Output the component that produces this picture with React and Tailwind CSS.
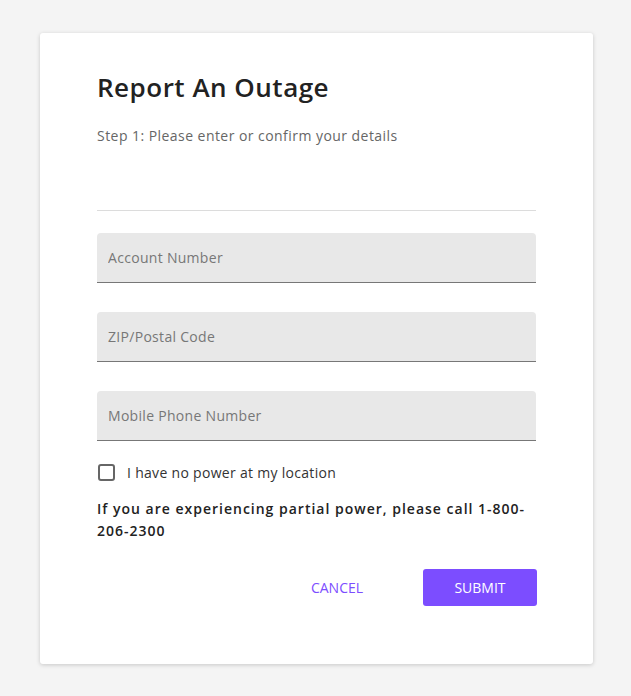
import React, { useState } from 'react'

const fields = ['Account Number', 'ZIP/Postal Code', 'Mobile Phone Number']

export default function App() {
  const [values, setValues] = useState({})
  const [noPower, setNoPower] = useState(false)

  return (
    <div className="min-h-screen bg-[#f4f4f4] pt-[33px] pl-[40px] font-['Open_Sans',sans-serif]">
      <div className="w-[553px] h-[631px] bg-white rounded-[3px] shadow-[0_1px_4px_rgba(0,0,0,0.18)] px-[57px] pt-[36px]">
        <h1 className="text-[26px] leading-[36px] font-semibold text-[#222] tracking-[0.5px]">Report An Outage</h1>
        <p className="mt-[21px] text-[14px] leading-[20px] text-[#666] tracking-[0.45px]">Step 1: Please enter or confirm your details</p>

        <div className="mt-[64px] border-t border-[#dcdcdc]" />

        <div className="mt-[22px] flex flex-col gap-[29px]">
          {fields.map(f => (
            <input
              key={f}
              placeholder={f}
              value={values[f] || ''}
              onChange={e => setValues({ ...values, [f]: e.target.value })}
              className="h-[50px] w-full bg-[#e8e8e8] rounded-t-[4px] border-b border-[#777] px-[11px] text-[14px] tracking-[0.3px] text-[#333] placeholder:text-[#777] outline-none"
            />
          ))}
        </div>

        <label className="mt-[21px] flex items-center gap-[12px] cursor-pointer">
          <input
            type="checkbox"
            checked={noPower}
            onChange={() => setNoPower(!noPower)}
            className="w-[17px] h-[17px] ml-[1px] appearance-none border-2 border-[#666] rounded-[3px] checked:bg-[#7c4dff] checked:border-[#7c4dff]"
          />
          <span className="text-[14px] text-[#333] tracking-[0.3px]">I have no power at my location</span>
        </label>

        <p className="mt-[15px] text-[14px] leading-[22px] font-semibold text-[#222] tracking-[1px]">
          If you are experiencing partial power, please call 1-800-206-2300
        </p>

        <div className="mt-[27px] flex justify-end items-center">
          <button className="w-[114px] h-[37px] text-[14px] text-[#7c4dff] uppercase">Cancel</button>
          <button className="ml-[29px] -mr-[1px] w-[114px] h-[37px] rounded-[3px] bg-[#7c4dff] text-white text-[14px] font-medium uppercase">Submit</button>
        </div>
      </div>
    </div>
  )
}
